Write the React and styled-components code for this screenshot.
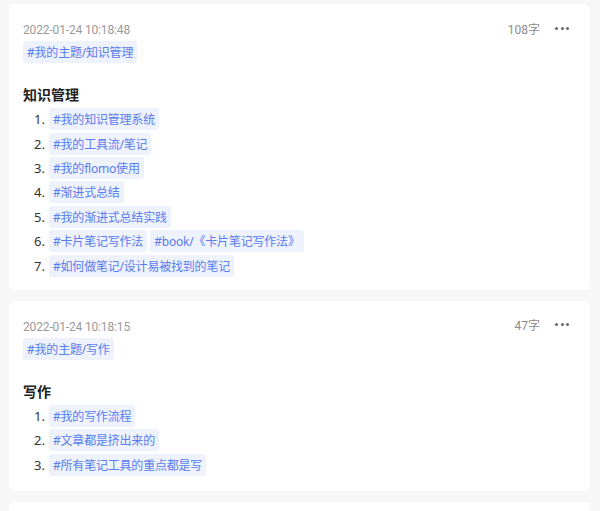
import styled, { createGlobalStyle } from "styled-components";

const GlobalStyle = createGlobalStyle`
  body {
    margin: 0;
    background-color: #f7f7f7;
    font-family: "Noto Sans", "Noto Sans CJK SC", sans-serif;
  }
`;

const Page = styled.div`
  display: flex;
  flex-direction: column;
  gap: 11px;
  padding: 4px 10px 0 9px;
`;

const Card = styled.div`
  background-color: #fff;
  border-radius: 6px;
  padding: 14px 14px ${(props) => props.bottom || 12}px;
  min-height: ${(props) => props.minHeight || 0}px;
`;

const Header = styled.div`
  display: flex;
  align-items: center;
  justify-content: space-between;
  height: 20px;
`;

const Date = styled.span`
  font-family: Roboto, "Noto Sans", sans-serif;
  font-size: 12px;
  letter-spacing: -0.15px;
  color: #9a9a9a;
  padding-top: 4px;
`;

const Meta = styled.div`
  display: flex;
  align-items: center;
  gap: 15px;
  padding-right: 7px;
  font-size: 12px;
  color: #8c8c8c;
  font-family: Roboto, "Noto Sans CJK SC", sans-serif;
`;

const More = styled.span`
  display: flex;
  gap: 2.5px;
  span {
    width: 3px;
    height: 3px;
    border-radius: 50%;
    background-color: #666;
  }
`;

const Tag = styled.span`
  display: inline-flex;
  align-items: center;
  height: 22px;
  padding: 0 4px;
  border-radius: 3px;
  background-color: #eef2fd;
  color: #5a7cec;
  font-size: 12px;
  font-family: "Noto Sans", "Noto Sans CJK SC", sans-serif;
  letter-spacing: -0.2px;
`;

const TopicRow = styled.div`
  margin-top: 2px;
  height: 22px;
`;

const Heading = styled.div`
  margin-top: 21px;
  height: 22px;
  line-height: 22px;
  font-size: 14px;
  font-weight: 700;
  color: #222;
  font-family: "Noto Sans CJK SC", sans-serif;
`;

const List = styled.ol`
  margin: 2px 0 0;
  padding: 0;
  list-style: none;
`;

const Item = styled.li`
  display: flex;
  align-items: center;
  gap: 3px;
  height: 24.4px;
`;

const Num = styled.span`
  width: 23px;
  text-align: right;
  padding-right: 1px;
  box-sizing: border-box;
  font-size: 13px;
  color: #333;
  font-family: "Noto Sans", sans-serif;
`;

const notes = [
  {
    date: "2022-01-24 10:18:48",
    count: "108字",
    topic: "#我的主题/知识管理",
    title: "知识管理",
    bottom: 12,
    items: [
      ["#我的知识管理系统"],
      ["#我的工具流/笔记"],
      ["#我的flomo使用"],
      ["#渐进式总结"],
      ["#我的渐进式总结实践"],
      ["#卡片笔记写作法", "#book/《卡片笔记写作法》"],
      ["#如何做笔记/设计易被找到的笔记"],
    ],
  },
  {
    date: "2022-01-24 10:18:15",
    count: "47字",
    topic: "#我的主题/写作",
    title: "写作",
    bottom: 14,
    items: [
      ["#我的写作流程"],
      ["#文章都是挤出来的"],
      ["#所有笔记工具的重点都是写"],
    ],
  },
];

const App = () => {
  return (
    <>
      <GlobalStyle />
      <Page>
        {notes.map((note) => (
          <Card key={note.date} bottom={note.bottom}>
            <Header>
              <Date>{note.date}</Date>
              <Meta>
                <span>{note.count}</span>
                <More>
                  <span />
                  <span />
                  <span />
                </More>
              </Meta>
            </Header>
            <TopicRow>
              <Tag>{note.topic}</Tag>
            </TopicRow>
            <Heading>{note.title}</Heading>
            <List>
              {note.items.map((tags, i) => (
                <Item key={i}>
                  <Num>{i + 1}.</Num>
                  {tags.map((t) => (
                    <Tag key={t}>{t}</Tag>
                  ))}
                </Item>
              ))}
            </List>
          </Card>
        ))}
        <Card minHeight={40} />
      </Page>
    </>
  );
};

export default App;
